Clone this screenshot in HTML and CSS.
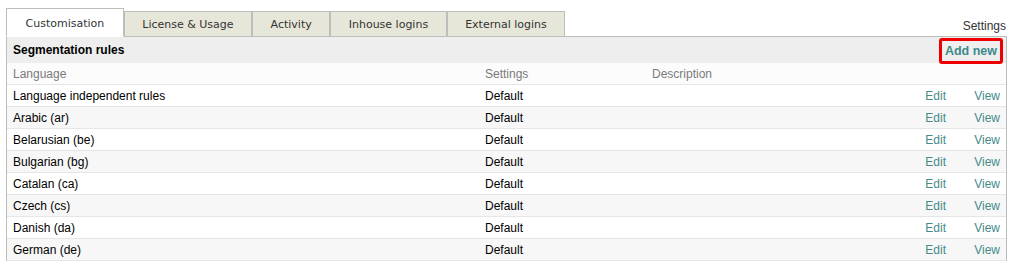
FILE: index.html
```html
<!DOCTYPE html>
<html>
<head>
<meta charset="utf-8">
<link rel="stylesheet" href="styles.css">
</head>
<body>
<div class="page">
  <div class="tabbar">
    <div class="tabs">
      <div class="tab active">Customisation</div>
      <div class="tab">License &amp; Usage</div>
      <div class="tab">Activity</div>
      <div class="tab">Inhouse logins</div>
      <div class="tab">External logins</div>
    </div>
    <div class="crumb">Settings</div>
  </div>
  <div class="panel">
    <div class="panel-head">
      <div class="panel-title">Segmentation rules</div>
      <a class="add-new">Add new</a>
    </div>
    <div class="row head">
      <div>Language</div><div>Settings</div><div>Description</div><div></div><div></div>
    </div>
    <div class="row"><div>Language independent rules</div><div>Default</div><div></div><div class="lnk">Edit</div><div class="lnk">View</div></div>
    <div class="row alt"><div>Arabic (ar)</div><div>Default</div><div></div><div class="lnk">Edit</div><div class="lnk">View</div></div>
    <div class="row"><div>Belarusian (be)</div><div>Default</div><div></div><div class="lnk">Edit</div><div class="lnk">View</div></div>
    <div class="row alt"><div>Bulgarian (bg)</div><div>Default</div><div></div><div class="lnk">Edit</div><div class="lnk">View</div></div>
    <div class="row"><div>Catalan (ca)</div><div>Default</div><div></div><div class="lnk">Edit</div><div class="lnk">View</div></div>
    <div class="row alt"><div>Czech (cs)</div><div>Default</div><div></div><div class="lnk">Edit</div><div class="lnk">View</div></div>
    <div class="row"><div>Danish (da)</div><div>Default</div><div></div><div class="lnk">Edit</div><div class="lnk">View</div></div>
    <div class="row alt"><div>German (de)</div><div>Default</div><div></div><div class="lnk">Edit</div><div class="lnk">View</div></div>
  </div>
</div>
</body>
</html>
```

FILE: styles.css
```css
html, body {
  margin: 0;
  padding: 0;
  background: #ffffff;
}
body {
  font-family: "Liberation Sans", Arial, sans-serif;
  font-size: 12px;
  color: #000;
}
.page {
  padding: 8px 6px 0 6px;
  width: 1001px;
}
.tabbar {
  display: flex;
  justify-content: space-between;
  align-items: flex-end;
}
.tabs {
  display: flex;
  align-items: flex-end;
  margin-bottom: -1px;
  position: relative;
  z-index: 1;
}
.tab {
  font-family: "DejaVu Sans", Verdana, sans-serif;
  font-size: 11px;
  color: #333;
  background: #e7e7d9;
  border: 1px solid #bdbdbd;
  height: 24px;
  line-height: 25px;
  padding: 0 17.5px;
  box-sizing: content-box;
}
.tab.active {
  background: #ffffff;
  height: 27px;
  line-height: 29px;
  border-bottom-color: #ffffff;
  padding: 0 18.5px;
}
.crumb {
  color: #333;
  padding-bottom: 3px;
  margin-right: 1px;
}
.panel {
  border: 1px solid #bdbdbd;
  border-bottom: none;
}
.panel-head {
  display: flex;
  justify-content: space-between;
  align-items: center;
  background: #eeeeee;
  height: 26px;
  padding-left: 6px;
  padding-right: 3px;
}
.panel-title {
  font-weight: bold;
}
.add-new {
  font-weight: bold;
  font-size: 12.5px;
  color: #3e8a8a;
  border: 3px solid #ee0000;
  border-radius: 3px;
  height: 20px;
  line-height: 20px;
  padding: 0 3px;
  margin-top: 2px;
  background: #efefef;
}
.row {
  display: grid;
  grid-template-columns: 472px 167px 1fr 50px 54px;
  height: 21px;
  line-height: 22px;
  border-bottom: 1px solid #e6e6e6;
  padding-left: 6px;
  padding-right: 6px;
  background: #ffffff;
}
.row.alt {
  background: #f7f7f7;
}
.row.head {
  color: #7a7a7a;
  background: #fcfcfc;
}
.lnk {
  text-align: right;
  color: #468a8a;
}
```
